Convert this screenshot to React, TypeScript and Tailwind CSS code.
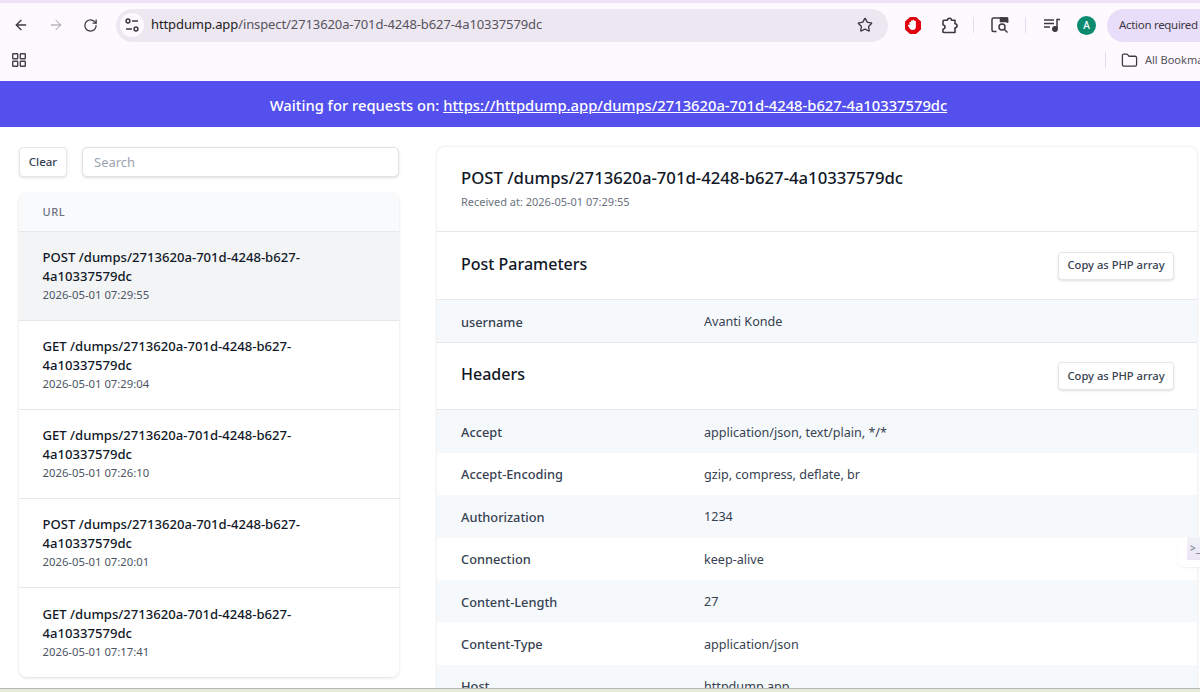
import { ArrowLeft, ArrowRight, Folder, RotateCw, Star } from "lucide-react";

const requests = [
  { method: "POST", time: "2026-05-01 07:29:55", active: true },
  { method: "GET", time: "2026-05-01 07:29:04" },
  { method: "GET", time: "2026-05-01 07:26:10" },
  { method: "POST", time: "2026-05-01 07:20:01" },
  { method: "GET", time: "2026-05-01 07:17:41" },
];

const headers = [
  ["Accept", "application/json, text/plain, */*"],
  ["Accept-Encoding", "gzip, compress, deflate, br"],
  ["Authorization", "1234"],
  ["Connection", "keep-alive"],
  ["Content-Length", "27"],
  ["Content-Type", "application/json"],
  ["Host", "httpdump.app"],
];

const TuneIcon = () => (
  <svg width="16" height="16" viewBox="0 0 16 16" fill="none" stroke="#3c3a41" strokeWidth="1.5">
    <circle cx="4" cy="4" r="1.9" />
    <path d="M8 4h6M2 12h6" />
    <circle cx="12" cy="12" r="1.9" />
  </svg>
);

const AppsIcon = () => (
  <svg width="14" height="14" viewBox="0 0 14 14" fill="none" stroke="#47454c" strokeWidth="1.4">
    <rect x="0.7" y="0.7" width="5" height="5" rx="0.5" />
    <rect x="8.3" y="0.7" width="5" height="5" rx="0.5" />
    <rect x="0.7" y="8.3" width="5" height="5" rx="0.5" />
    <rect x="8.3" y="8.3" width="5" height="5" rx="0.5" />
  </svg>
);

const ShieldHandIcon = () => (
  <svg width="16" height="17" viewBox="0 0 16 17">
    <path d="M5 0h6l5 4.500v8L11 17H5l-5-4.500v-8z" fill="#e2000f" />
    <path
      d="M4.500 9V5.500a.8.8 0 0 1 1.600 0V4a.8.8 0 0 1 1.600 0v-.4a.8.8 0 0 1 1.600 0V4.500a.8.8 0 0 1 1.600 0v5a3.500 3.500 0 0 1-3.500 3.500c-1.500 0-2.300-.7-3-2L3 8.800c-.4-.8.600-1.400 1.200-.8z"
      fill="#ffffff"
    />
  </svg>
);

const PuzzleIcon = () => (
  <svg width="17" height="17" viewBox="0 0 17 17" fill="none" stroke="#3c3a41" strokeWidth="1.6" strokeLinejoin="round">
    <path d="M3 3.200h3.500a2 2 0 0 1 4 0H14v3.500a2 2 0 0 1 0 4V15.500H3.500l-1.500-.2v-3.300a2 2 0 0 0 0-4V4z" />
  </svg>
);

const LensIcon = () => (
  <svg width="18" height="16" viewBox="0 0 18 16" fill="none" stroke="#3c3a41" strokeWidth="1.5">
    <path d="M5.500 14.500H2.500A1.500 1.500 0 0 1 1 13V2.500A1.500 1.500 0 0 1 2.500 1H15a1.500 1.500 0 0 1 1.500 1.500V6" />
    <path d="M9.500 1h7v3.500h-7z" fill="#3c3a41" />
    <circle cx="11" cy="10" r="3" />
    <path d="M13.200 12.200 16.500 15.500" />
  </svg>
);

const MediaIcon = () => (
  <svg width="16" height="14" viewBox="0 0 16 14" fill="none" stroke="#3c3a41" strokeWidth="1.5">
    <path d="M0 2h10M0 5.500h10M0 9h6" />
    <path d="M13 10V1.500h3" />
    <circle cx="11" cy="11" r="2.200" fill="#3c3a41" />
  </svg>
);

const Divider = () => <div className="h-[16px] w-px shrink-0 bg-[#e4dcee]" />;

const CopyButton = () => (
  <button className="h-[28px] w-[116px] rounded-[4px] border border-[#e5e7eb] bg-white text-[11.2px] font-medium text-[#374151] shadow-sm">
    Copy as PHP array
  </button>
);

const KeyValueRow = ({ name, value, striped }: { name: string; value: string; striped: boolean }) => (
  <div className={`flex h-[42.4px] shrink-0 items-center px-6 pt-[1px] leading-[20px] text-[#374151] ${striped ? "bg-[#f6f9fc]" : "bg-white"}`}>
    <div className="w-[243px] text-[12.8px] font-medium">{name}</div>
    <div className="mt-[1px] text-[12.6px]">{value}</div>
  </div>
);

export default function App() {
  return (
    <div className="relative flex h-[692px] w-[1200px] flex-col overflow-hidden bg-white font-['Noto_Sans',sans-serif]">
      {/* browser chrome */}
      <div className="h-[81px] shrink-0 bg-[#fef8ff]">
        <div className="h-[3px] bg-[#efe3f8]" />
        <div className="flex h-[44px] items-center pl-[13px]">
          <ArrowLeft size={16} color="#3c3a41" strokeWidth={2} className="shrink-0" />
          <ArrowRight size={16} color="#9b98a0" strokeWidth={1.5} className="ml-[19px] shrink-0" />
          <RotateCw size={15} color="#3c3a41" strokeWidth={2} className="ml-[19px] shrink-0" />
          <div className="ml-[18px] flex h-[33px] w-[772px] shrink-0 items-center rounded-full bg-[#ede7f2] pr-[15px] pl-[4px]">
            <div className="flex h-[24px] w-[24px] items-center justify-center rounded-full bg-[#fef8ff]">
              <TuneIcon />
            </div>
            <div className="ml-[7px] flex-1 text-[13px] tracking-[-0.1px] text-[#56535c]">
              <span className="text-[#1d1b20]">httpdump.app</span>/inspect/2713620a-701d-4248-b627-4a10337579dc
            </div>
            <Star size={16} color="#3c3a41" strokeWidth={2} />
          </div>
          <div className="ml-[17px] shrink-0"><ShieldHandIcon /></div>
          <div className="ml-[20px] shrink-0"><PuzzleIcon /></div>
          <div className="ml-[15px] shrink-0"><Divider /></div>
          <div className="ml-[17px] shrink-0"><LensIcon /></div>
          <div className="ml-[16px] shrink-0"><Divider /></div>
          <div className="ml-[18px] shrink-0"><MediaIcon /></div>
          <div className="ml-[17px] flex h-[19px] w-[19px] shrink-0 items-center justify-center rounded-full bg-[#0b8a6f] text-[10px] font-medium text-white">
            A
          </div>
          <div className="ml-[11px] flex h-[33px] flex-1 items-center rounded-l-full bg-[#e9defa] pl-[12px] text-[11.5px] tracking-[-0.3px] whitespace-nowrap text-[#3c3a41]">
            Action required
          </div>
        </div>
        <div className="flex h-[26px] items-center pl-[12px]">
          <AppsIcon />
          <div className="ml-auto flex w-[95px] shrink-0 items-center overflow-hidden">
            <Divider />
            <Folder size={17} color="#3c3a41" strokeWidth={1.8} className="ml-[15px] shrink-0" />
            <span className="ml-[7px] text-[11px] whitespace-nowrap text-[#55525a]">All Bookmarks</span>
          </div>
        </div>
      </div>

      {/* banner */}
      <div className="flex h-[46px] shrink-0 items-center justify-center bg-[#5350ee] pt-[3px] pl-[17px] text-[14.75px] font-medium text-white">
        <span>
          Waiting for requests on: <span className="underline">https://httpdump.app/dumps/2713620a-701d-4248-b627-4a10337579dc</span>
        </span>
      </div>

      <div className="flex min-h-0 flex-1 pt-5 pl-[19px]">
        {/* request list */}
        <div className="w-[380px] shrink-0">
          <div className="flex h-[30px] gap-[15px]">
            <button className="w-[48px] rounded-[4px] border border-[#e5e7eb] bg-white text-[11.5px] font-medium text-[#374151] shadow-sm">
              Clear
            </button>
            <div className="flex flex-1 items-center rounded-[5px] border border-[#e0e2e6] bg-white pt-[2px] pl-[11px] text-[13px] text-[#9ca3af] shadow-sm">
              Search
            </div>
          </div>
          <div className="mt-[16px] overflow-hidden rounded-[8px] bg-white shadow-[0_1px_3px_rgba(0,0,0,0.14)]">
            <div className="flex h-[39px] items-center border-b border-[#e5e7eb] bg-[#f9fafb] px-[23.5px] text-[11px] font-medium tracking-[0.6px] text-[#6b7280]">
              URL
            </div>
            {requests.map((r, i) => (
              <div
                key={i}
                className={`flex h-[89px] flex-col justify-center px-[23.5px] ${i < requests.length - 1 ? "border-b border-[#e5e7eb]" : ""} ${r.active ? "bg-[#f3f4f6]" : "bg-white"}`}
              >
                <div className="w-[280px] text-[13.1px] leading-[19px] font-medium text-[#111827]">
                  {`${r.method} /dumps/2713620a-701d-4248-b627-4a10337579dc`}
                </div>
                <div className="text-[11.3px] leading-[18px] text-[#4b5563]">{r.time}</div>
              </div>
            ))}
          </div>
        </div>

        {/* request detail */}
        <div className="ml-[38px] flex min-h-0 w-[760px] shrink-0 flex-col overflow-hidden rounded-t-[8px] bg-white shadow-[0_0_3px_rgba(0,0,0,0.14)]">
          <div className="flex h-[85px] shrink-0 flex-col justify-center border-b border-[#e5e7eb] px-6 pb-[3px]">
            <div className="text-[16.7px] leading-[26px] font-medium text-[#111827]">
              POST /dumps/2713620a-701d-4248-b627-4a10337579dc
            </div>
            <div className="mt-[2px] text-[11px] leading-[18px] text-[#6b7280]">Received at: 2026-05-01 07:29:55</div>
          </div>
          <div className="flex h-[68px] shrink-0 items-center justify-between border-b border-[#e5e7eb] pr-[23px] pl-6">
            <div className="pb-[3px] text-[16px] font-medium text-[#111827]">Post Parameters</div>
            <CopyButton />
          </div>
          <KeyValueRow name="username" value="Avanti Konde" striped />
          <div className="flex h-[68px] shrink-0 items-center justify-between border-y border-[#e5e7eb] pr-[23px] pl-6">
            <div className="pb-[4px] text-[16px] font-medium text-[#111827]">Headers</div>
            <CopyButton />
          </div>
          {headers.map(([name, value], i) => (
            <KeyValueRow key={name} name={name} value={value} striped={i % 2 === 0} />
          ))}
        </div>
      </div>

      {/* side panel tab */}
      <div className="absolute top-[537px] right-0 h-[30px] w-[22px] rounded-l-[6px] bg-white pl-[9px] shadow-[0_1px_2px_rgba(0,0,0,0.06)]">
        <div className="flex h-[23px] items-center bg-gradient-to-b from-[#f1f3f7] to-[#ebe4f5] pl-[3px] text-[10px] whitespace-nowrap text-[#6b7280]">
          &gt;_
        </div>
      </div>

      {/* taskbar edge */}
      <div className="absolute top-[688px] left-0 h-[4px] w-[1200px] border-t border-[#b5b8b4] bg-[#e6ecd8]" />
    </div>
  );
}
